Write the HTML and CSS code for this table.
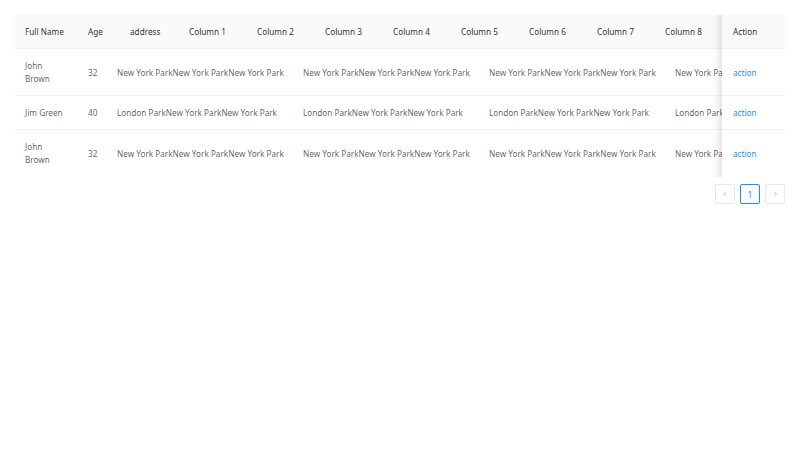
FILE: index.html
```html
<!DOCTYPE html>
<html>
<head>
<meta charset="utf-8">
<link rel="stylesheet" href="styles.css">
</head>
<body>
<div class="wrap">
  <div class="table">
    <div class="cells head">
      <div class="c w63">Full Name</div>
      <div class="c w42">Age</div>
      <div class="c w59">address</div>
      <div class="c w68">Column 1</div>
      <div class="c w68">Column 2</div>
      <div class="c w68">Column 3</div>
      <div class="c w68">Column 4</div>
      <div class="c w68">Column 5</div>
      <div class="c w68">Column 6</div>
      <div class="c w68">Column 7</div>
      <div class="c w68">Column 8</div>
    </div>
    <div class="act head">Action</div>

    <div class="cells body">
      <div class="c w63">John<br>Brown</div>
      <div class="c w29">32</div>
      <div class="c w186">New York ParkNew York ParkNew York Park</div>
      <div class="c w186">New York ParkNew York ParkNew York Park</div>
      <div class="c w186">New York ParkNew York ParkNew York Park</div>
      <div class="c wlast">New York ParkNew York ParkNew York Park</div>
    </div>
    <div class="act body"><a class="link">action</a></div>

    <div class="cells body">
      <div class="c w63">Jim Green</div>
      <div class="c w29">40</div>
      <div class="c w186">London ParkNew York ParkNew York Park</div>
      <div class="c w186">London ParkNew York ParkNew York Park</div>
      <div class="c w186">London ParkNew York ParkNew York Park</div>
      <div class="c wlast">London ParkNew York ParkNew York Park</div>
    </div>
    <div class="act body"><a class="link">action</a></div>

    <div class="cells body last">
      <div class="c w63">John<br>Brown</div>
      <div class="c w29">32</div>
      <div class="c w186">New York ParkNew York ParkNew York Park</div>
      <div class="c w186">New York ParkNew York ParkNew York Park</div>
      <div class="c w186">New York ParkNew York ParkNew York Park</div>
      <div class="c wlast">New York ParkNew York ParkNew York Park</div>
    </div>
    <div class="act body last"><a class="link">action</a></div>
  </div>

  <div class="pager">
    <div class="pbtn disabled">
      <svg width="8" height="8" viewBox="0 0 8 8"><path d="M5 1.5 L2.5 4 L5 6.5" fill="none" stroke="currentColor" stroke-width="1"/></svg>
    </div>
    <div class="pbtn active">1</div>
    <div class="pbtn disabled">
      <svg width="8" height="8" viewBox="0 0 8 8"><path d="M3 1.5 L5.5 4 L3 6.5" fill="none" stroke="currentColor" stroke-width="1"/></svg>
    </div>
  </div>
</div>
</body>
</html>
```

FILE: styles.css
```css
* { box-sizing: border-box; }
html, body { margin: 0; padding: 0; background: #fff; }
body {
  font-family: "Noto Sans", "Open Sans", sans-serif;
  font-size: 8.2px;
  line-height: 13px;
  color: rgba(0,0,0,0.65);
}
.wrap { padding: 15px; width: 800px; }
.table {
  display: grid;
  grid-template-columns: 707px 63px;
}
.cells {
  display: flex;
  overflow: hidden;
  border-bottom: 1px solid #f0f0f0;
  align-items: center;
}
.cells.head { background: #fafafa; color: rgba(0,0,0,0.85); }
.c {
  flex: none;
  padding: 10px;
  white-space: nowrap;
}
.w63 { width: 63px; white-space: normal; }
.w42 { width: 42px; }
.w59 { width: 59px; }
.w68 { width: 68px; }
.w29 { width: 29px; }
.w186 { width: 186px; overflow: hidden; }
.wlast { width: 57px; padding-right: 0; overflow: hidden; }
.act {
  position: relative;
  display: flex;
  align-items: center;
  padding: 10px 11px;
  border-bottom: 1px solid #f0f0f0;
  background: #fff;
}
.act.head { background: #fafafa; color: rgba(0,0,0,0.85); }
.cells.last, .act.last { border-bottom: none; }
.act::before {
  content: "";
  position: absolute;
  left: -10px;
  top: 0;
  bottom: -1px;
  width: 10px;
  box-shadow: inset -10px 0 8px -8px rgba(0,0,0,0.15);
}
.link { color: #1890ff; text-decoration: none; }
.pager {
  display: flex;
  justify-content: flex-end;
  gap: 5px;
  margin-top: 8px;
}
.pbtn {
  width: 20px;
  height: 20px;
  border: 1px solid #d9d9d9;
  border-radius: 2px;
  display: flex;
  align-items: center;
  justify-content: center;
  font-size: 8.5px;
  color: rgba(0,0,0,0.65);
}
.pbtn.disabled { color: rgba(0,0,0,0.25); border-color: #e8e8e8; }
.pbtn.active { border-color: #1890ff; color: #1890ff; }
```
